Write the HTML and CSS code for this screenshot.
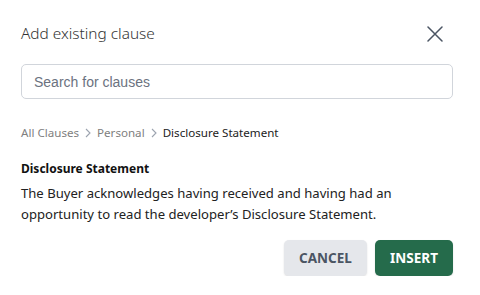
FILE: index.html
```html
<!DOCTYPE html>
<html>
<head>
<meta charset="utf-8">
<link rel="stylesheet" href="styles.css">
</head>
<body>
<div class="dialog">
  <div class="header">
    <h1 class="title">Add existing clause</h1>
    <button class="close" aria-label="Close">
      <svg width="16" height="16" viewBox="0 0 16 16"><path d="M1 1 L15 15 M15 1 L1 15" stroke="#4b5563" stroke-width="1.5" fill="none" stroke-linecap="round"/></svg>
    </button>
  </div>
  <input class="search" type="text" placeholder="Search for clauses">
  <nav class="crumbs">
    <span class="crumb">All Clauses</span>
    <svg class="sep" width="8" height="10" viewBox="0 0 8 10"><path d="M2 1 L6 5 L2 9" stroke="#9ca3af" stroke-width="1.1" fill="none"/></svg>
    <span class="crumb">Personal</span>
    <svg class="sep" width="8" height="10" viewBox="0 0 8 10"><path d="M2 1 L6 5 L2 9" stroke="#9ca3af" stroke-width="1.1" fill="none"/></svg>
    <span class="crumb current">Disclosure Statement</span>
  </nav>
  <h2 class="clause-title">Disclosure Statement</h2>
  <p class="clause-body">The Buyer acknowledges having received and having had an opportunity to read the developer’s Disclosure Statement.</p>
  <div class="actions">
    <button class="btn cancel">CANCEL</button>
    <button class="btn insert">INSERT</button>
  </div>
</div>
</body>
</html>
```
FILE: styles.css
```css
html, body {
  margin: 0;
  padding: 0;
  background: #ffffff;
}
body {
  font-family: "Noto Sans", "Open Sans", sans-serif;
  color: #1f2328;
}
.dialog {
  padding: 22px 27px 0 21px;
  display: flex;
  flex-direction: column;
}
.header {
  display: flex;
  justify-content: space-between;
  align-items: center;
  height: 24px;
}
.title {
  margin: 0;
  font-size: 15.4px;
  font-weight: 300;
  line-height: 24px;
  color: #333;
}
.close {
  border: none;
  background: none;
  padding: 0;
  margin-right: 10px;
  width: 16px;
  height: 16px;
  display: flex;
}
.search {
  margin-top: 18px;
  box-sizing: border-box;
  width: 100%;
  height: 35px;
  border: 1px solid #d1d5db;
  border-radius: 5px;
  padding: 0 12px;
  font-family: "Liberation Sans", Arial, sans-serif;
  font-size: 14px;
  color: #333;
  outline: none;
}
.search::placeholder {
  color: #6b7280;
}
.crumbs {
  margin-top: 25px;
  display: flex;
  align-items: center;
  gap: 4px;
  font-size: 11.6px;
  line-height: 18px;
  color: #808080;
}
.sep {
  margin: 0 1px;
}
.crumb.current {
  color: #222;
}
.clause-title {
  margin: 18px 0 0;
  font-size: 12px;
  font-weight: 700;
  line-height: 18px;
  color: #111;
}
.clause-body {
  margin: 5px 0 0;
  font-size: 13.1px;
  line-height: 21px;
  color: #222;
}
.actions {
  margin-top: 15px;
  display: flex;
  justify-content: flex-end;
  gap: 8px;
}
.btn {
  height: 36px;
  border: none;
  border-radius: 5px;
  font-family: "Noto Sans", "Open Sans", sans-serif;
  font-size: 13.5px;
  font-weight: 700;
  padding: 0;
  box-shadow: 0 1px 2px rgba(0,0,0,0.12);
}
.cancel {
  width: 83px;
  background: #e5e7eb;
  color: #4b5563;
}
.insert {
  width: 78px;
  background: #256b4b;
  color: #ffffff;
}
```
